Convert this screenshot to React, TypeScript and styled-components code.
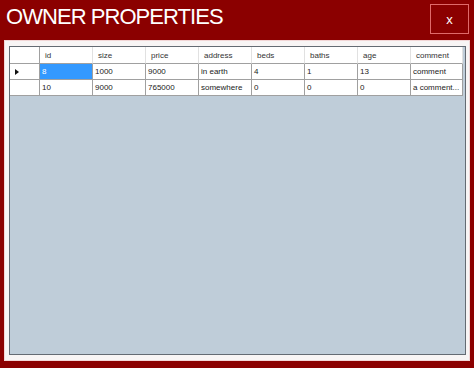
import React from "react";
import styled, { createGlobalStyle } from "styled-components";

const Global = createGlobalStyle`
  html, body { margin: 0; padding: 0; }
  body {
    background: #8b0000;
    font-family: "Liberation Sans", Arial, sans-serif;
  }
`;

const Window = styled.div`
  width: 474px;
  height: 368px;
  background: #8b0000;
  display: flex;
  flex-direction: column;
  box-sizing: border-box;
`;

const TitleBar = styled.div`
  height: 40px;
  display: flex;
  align-items: flex-start;
  justify-content: space-between;
  padding: 0 5px 0 6px;
  box-sizing: border-box;
`;

const Title = styled.h1`
  margin: 5px 0 0 0;
  font-family: "Liberation Sans", Arial, sans-serif;
  font-weight: normal;
  font-size: 22px;
  letter-spacing: -0.95px;
  color: #ffffff;
  line-height: 24px;
`;

const CloseButton = styled.button`
  margin-top: 4px;
  width: 39px;
  height: 30px;
  background: transparent;
  border: 1px solid #e06a6a;
  color: #ffffff;
  font-family: "Liberation Sans", Arial, sans-serif;
  font-size: 13px;
  padding: 0;
  display: flex;
  align-items: center;
  justify-content: center;
`;

const Panel = styled.div`
  flex: 1;
  margin: 0 4px 7px 4px;
  background: #f8f5f5;
  border: 1px solid #f2d6d6;
  padding: 5px 3px 5px 4px;
  display: flex;
  box-sizing: border-box;
`;

const Grid = styled.div`
  flex: 1;
  background: #bfcdd9;
  border: 1px solid #646b73;
  display: flex;
  flex-direction: column;
  align-items: flex-start;
`;

const Table = styled.div`
  display: grid;
  grid-template-columns: 30px repeat(7, 53px) 52px;
  grid-template-rows: 17px;
  grid-auto-rows: 16px;
`;

const HeaderCell = styled.div<{ $corner?: boolean }>`
  background: #ffffff;
  border-right: 1px solid ${(p) => (p.$corner ? "#a0a0a0" : "#e1e1e1")};
  border-bottom: 1px solid #a0a0a0;
  font-size: 8px;
  color: #333;
  padding-left: 5px;
  display: flex;
  align-items: center;
  box-sizing: border-box;
`;

const RowHeader = styled.div`
  background: #ffffff;
  border-right: 1px solid #a0a0a0;
  border-bottom: 1px solid #a0a0a0;
  display: flex;
  align-items: center;
  padding-left: 5px;
  box-sizing: border-box;
`;

const Cell = styled.div<{ $selected?: boolean }>`
  background: ${(p) => (p.$selected ? "#3399ff" : "#ffffff")};
  color: ${(p) => (p.$selected ? "#ffffff" : "#222")};
  border-right: 1px solid #a0a0a0;
  border-bottom: 1px solid #a0a0a0;
  font-size: 8px;
  padding-left: 2px;
  display: flex;
  align-items: center;
  white-space: nowrap;
  overflow: hidden;
  box-sizing: border-box;
`;

const Arrow = styled.span`
  width: 0;
  height: 0;
  border-top: 3px solid transparent;
  border-bottom: 3px solid transparent;
  border-left: 4px solid #111;
`;

const columns = ["id", "size", "price", "address", "beds", "baths", "age", "comment"];
const rows = [
  ["8", "1000", "9000", "in earth", "4", "1", "13", "comment"],
  ["10", "9000", "765000", "somewhere", "0", "0", "0", "a comment..."],
];

export default function App() {
  return (
    <Window>
      <Global />
      <TitleBar>
        <Title>OWNER PROPERTIES</Title>
        <CloseButton>x</CloseButton>
      </TitleBar>
      <Panel>
        <Grid>
          <Table>
            <HeaderCell $corner />
            {columns.map((c) => (
              <HeaderCell key={c}>{c}</HeaderCell>
            ))}
            {rows.map((r, ri) => (
              <React.Fragment key={ri}>
                <RowHeader>{ri === 0 && <Arrow />}</RowHeader>
                {r.map((v, ci) => (
                  <Cell key={ci} $selected={ri === 0 && ci === 0}>
                    {v}
                  </Cell>
                ))}
              </React.Fragment>
            ))}
          </Table>
        </Grid>
      </Panel>
    </Window>
  );
}
